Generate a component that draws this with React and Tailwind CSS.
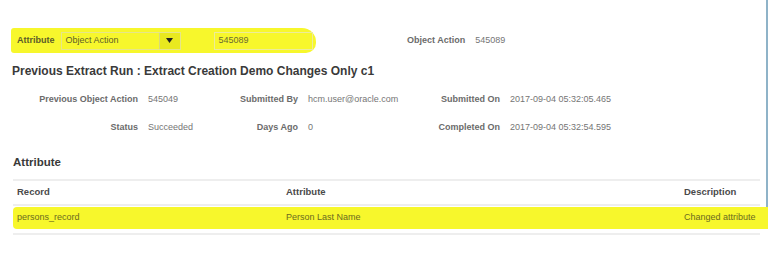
import React from "react";

const Field = ({ label, value, labelW, valueW }) => (
  <>
    <div
      className="text-right font-bold text-[#6b6b6b] shrink-0"
      style={{ width: labelW }}
    >
      {label}
    </div>
    <div className="pl-[10px] text-[#757575] shrink-0" style={{ width: valueW }}>
      {value}
    </div>
  </>
);

export default function App() {
  return (
    <div className="w-[768px] h-[255px] bg-white overflow-hidden font-['Liberation_Sans',Arial,sans-serif] text-[9px]">
      <div className="h-[228px] border-r-2 border-[#8fb3c8] pt-[28px]">
        {/* search row */}
        <div className="flex items-center h-[25px]">
          <div className="ml-[11px] w-[305px] h-[25px] bg-[#f7f72c] rounded-tr-[14px] rounded-br-[10px] rounded-l-[3px] flex items-center pl-[6px]">
            <span className="font-bold text-[#5c5c2a]">Attribute</span>
            <div className="ml-[6px] w-[120px] h-[18px] border border-[#e6e68a] flex items-center">
              <span className="flex-1 pl-[4px] text-[#5c5c2a]">Object Action</span>
              <div className="w-[21px] h-full bg-[#e9e91f] border-l border-[#d9d97a] flex items-center justify-center">
                <svg width="7" height="5" viewBox="0 0 7 5">
                  <path d="M0 0 L7 0 L3.5 5 Z" fill="#222" />
                </svg>
              </div>
            </div>
            <div className="ml-[33px] w-[99px] h-[18px] border border-[#ecec9a] flex items-center pl-[4px] text-[#6b6b30]">
              545089
            </div>
          </div>
          <span className="ml-[91px] font-bold text-[#6b6b6b]">Object Action</span>
          <span className="ml-[10px] text-[#757575]">545089</span>
        </div>

        {/* title */}
        <h1 className="mt-[10px] ml-[12px] text-[12px] leading-[16px] font-bold text-[#3a3a3a]">
          Previous Extract Run : Extract Creation Demo Changes Only c1
        </h1>

        {/* details */}
        <div className="ml-[12px] mt-[15px] flex flex-col gap-[17px] leading-[11px]">
          <div className="flex">
            <Field label="Previous Object Action" value="545049" labelW={126} valueW={72} />
            <Field label="Submitted By" value="hcm.user@oracle.com" labelW={88} valueW={112} />
            <Field label="Submitted On" value="2017-09-04 05:32:05.465" labelW={90} valueW={140} />
          </div>
          <div className="flex">
            <Field label="Status" value="Succeeded" labelW={126} valueW={72} />
            <Field label="Days Ago" value="0" labelW={88} valueW={112} />
            <Field label="Completed On" value="2017-09-04 05:32:54.595" labelW={90} valueW={140} />
          </div>
        </div>

        {/* attribute table */}
        <h2 className="mt-[22px] ml-[13px] text-[11.5px] leading-[14px] font-bold text-[#3a3a3a]">
          Attribute
        </h2>
        <div className="mt-[10px] ml-[13px] w-[747px]">
          <div className="flex items-center h-[27px] border-t-2 border-b-2 border-[#eeeeee] font-bold text-[#4a4a4a] text-[9.5px]">
            <div className="w-[273px] pl-[4px]">Record</div>
            <div className="w-[398px]">Attribute</div>
            <div>Description</div>
          </div>
          <div className="border-b-2 border-[#eeeeee] pt-[1px] pb-[4px]">
            <div className="flex items-center h-[22px] bg-[#f7f72c] rounded-l-[4px] -mr-[8px] text-[#6b6b20]">
              <div className="w-[273px] pl-[4px]">persons_record</div>
              <div className="w-[398px]">Person Last Name</div>
              <div>Changed attribute</div>
            </div>
          </div>
        </div>
      </div>
    </div>
  );
}
